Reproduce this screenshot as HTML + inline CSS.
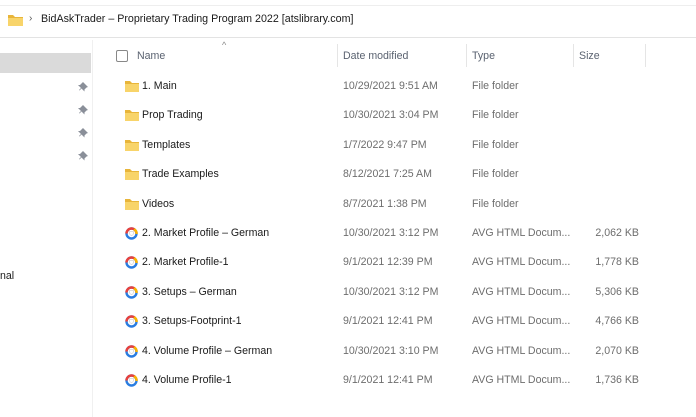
<!DOCTYPE html>
<html><head><style>
body{margin:0;width:696px;height:417px;background:#fff;font-family:"Liberation Sans",sans-serif;font-size:10.6px;color:#1a1a1a;position:relative;overflow:hidden}
.a{position:absolute;white-space:nowrap}
.g{color:#6d6d6d}
.hd{color:#5a6270}
.div{position:absolute;top:44px;width:1px;height:23px;background:#e5e5e5}
</style></head><body>
<div class="a" style="left:0;top:5px;width:696px;height:31px;border-bottom:1px solid #e3e3e3;border-top:1px solid #eee"></div>
<svg class="a" style="left:8px;top:14px" width="15" height="12"><path d="M0 1h5l2 2h8v9H0z" fill="#e8b53a"/><path d="M0 4h15v8H0z" fill="#f8d46a"/></svg>
<div class="a" style="left:29px;top:13px;font-size:10px;color:#555">›</div>
<div class="a" style="left:41px;top:13px;font-size:10.7px">BidAskTrader – Proprietary Trading Program 2022 [atslibrary.com]</div>
<div class="a" style="left:0;top:53px;width:91px;height:20px;background:#dadada"></div>
<div class="a" style="left:92px;top:40px;width:1px;height:377px;background:#f0f0f0"></div>
<svg class="a" style="left:78px;top:81px" width="10" height="85" fill="#8a8f99"><g id="p"><path d="M4 1l5 5-1.5 0.5-2 2 0 2L2.5 7.5 0.5 9.5 0 9 2 7 -1 4l2 0 2-2z" transform="translate(1,0)"/></g><use href="#p" y="23"/><use href="#p" y="46"/><use href="#p" y="69"/></svg>
<div class="a" style="left:0;top:270px">nal</div>
<div class="a" style="left:116px;top:50px;width:10px;height:10px;border:1px solid #888;border-radius:2px"></div>
<div class="a" style="left:222px;top:40px;font-size:9px;color:#888">^</div>
<div class="a hd" style="left:137px;top:50px">Name</div>
<div class="a hd" style="left:343px;top:50px">Date modified</div>
<div class="a hd" style="left:472px;top:50px">Type</div>
<div class="a hd" style="left:579px;top:50px">Size</div>
<div class="div" style="left:337px"></div><div class="div" style="left:466px"></div><div class="div" style="left:573px"></div><div class="div" style="left:645px"></div>
<div id="rows"></div>
<script>
var r=[["1. Main","10/29/2021 9:51 AM","File folder",""],["Prop Trading","10/30/2021 3:04 PM","File folder",""],["Templates","1/7/2022 9:47 PM","File folder",""],["Trade Examples","8/12/2021 7:25 AM","File folder",""],["Videos","8/7/2021 1:38 PM","File folder",""],["2. Market Profile – German","10/30/2021 3:12 PM","AVG HTML Docum...","2,062 KB"],["2. Market Profile-1","9/1/2021 12:39 PM","AVG HTML Docum...","1,778 KB"],["3. Setups – German","10/30/2021 3:12 PM","AVG HTML Docum...","5,306 KB"],["3. Setups-Footprint-1","9/1/2021 12:41 PM","AVG HTML Docum...","4,766 KB"],["4. Volume Profile – German","10/30/2021 3:10 PM","AVG HTML Docum...","2,070 KB"],["4. Volume Profile-1","9/1/2021 12:41 PM","AVG HTML Docum...","1,736 KB"]];
var h="";r.forEach(function(x,i){var y=80+i*29.4;
var ic=x[3]?'<svg class="a" style="left:125px;top:'+(y)+'px" width="13" height="13"><circle cx="6.5" cy="6.5" r="5" fill="none" stroke="#2a7de1" stroke-width="2.4"/><path d="M1.5 6.5A5 5 0 0 1 11.5 6.5" fill="none" stroke="#e8413c" stroke-width="2.4"/><path d="M9 2.2A5 5 0 0 1 11.5 7" fill="none" stroke="#f7b500" stroke-width="2.4"/><path d="M4.5 4.5h4v2.5l-2 2l-2-2z" fill="#fff" stroke="#aaa" stroke-width=".4"/></svg>':'<svg class="a" style="left:125px;top:'+(y+1)+'px" width="14" height="11"><path d="M0 0h5l2 2h7v9H0z" fill="#e8b53a"/><path d="M0 3h14v8H0z" fill="#f8d46a"/></svg>';
h+=ic+'<div class="a" style="left:142px;top:'+y+'px">'+x[0]+'</div><div class="a g" style="left:343px;top:'+y+'px">'+x[1]+'</div><div class="a g" style="left:472px;top:'+y+'px">'+x[2]+'</div><div class="a g" style="right:57px;top:'+y+'px">'+x[3]+'</div>';});
document.getElementById("rows").innerHTML=h;
</script>
</body></html>
